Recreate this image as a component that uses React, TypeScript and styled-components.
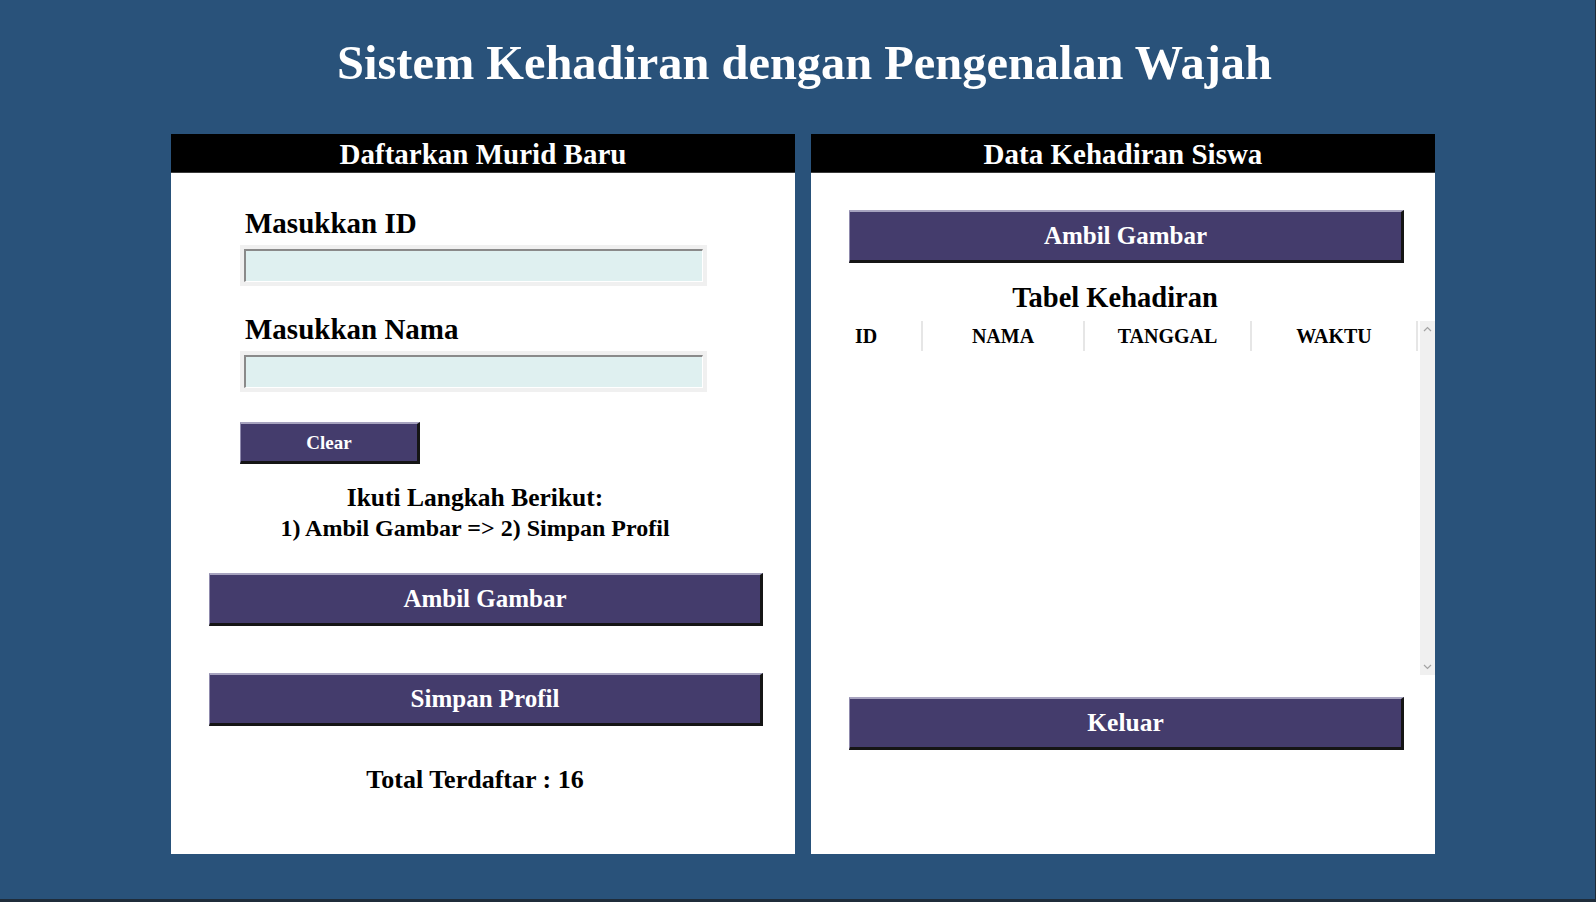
import React from 'react';
import styled, { createGlobalStyle } from 'styled-components';

const GlobalStyle = createGlobalStyle`
    html, body {
        margin: 0;
        padding: 0;
        background: #29527a;
    }
    * { box-sizing: border-box; }
`;

const Page = styled.div`
    height: 902px;
    background: #29527a;
    font-family: "Liberation Serif", "Times New Roman", serif;
    font-weight: bold;
    border-bottom: 3px solid #1f2c3a;
    border-right: 1px solid #1f2c3a;
    overflow: hidden;
`;

const Title = styled.h1`
    margin: 0;
    padding-top: 35px;
    padding-left: 14px;
    height: 91px;
    font-size: 48.4px;
    line-height: 56px;
    color: #ffffff;
    text-align: center;
`;

const Panels = styled.div`
    display: flex;
    gap: 16px;
    margin-top: 43px;
    padding-left: 171px;
`;

const Panel = styled.section`
    width: 624px;
    height: 720px;
    background: #ffffff;
    display: flex;
    flex-direction: column;
    align-items: flex-start;
`;

const PanelHeader = styled.div`
    width: 100%;
    height: 39px;
    padding-top: 2px;
    background: #000000;
    color: #ffffff;
    font-size: 29px;
    line-height: 37px;
    text-align: center;
    border-bottom: 1px solid #3a3a3a;
`;

const Label = styled.label<{ $top: number }>`
    display: block;
    margin-top: ${p => p.$top}px;
    margin-left: 74px;
    font-size: 29px;
    line-height: 34px;
    color: #000;
`;

const InputFrame = styled.div`
    margin-top: 5px;
    margin-left: 69px;
    width: 467px;
    height: 41px;
    border: 4px solid #f0f0f0;
`;

const Input = styled.input`
    display: block;
    width: 100%;
    height: 100%;
    margin: 0;
    padding: 0 4px;
    background: #dff0f0;
    border-style: solid;
    border-width: 2px 1px 1px 2px;
    border-color: #8a8a8a #ffffff #ffffff #8a8a8a;
    outline: none;
    font-family: inherit;
    font-size: 18px;
`;

const Button = styled.button<{ $w: number; $h: number; $size: number; $left: number; $top: number }>`
    display: block;
    margin: ${p => p.$top}px 0 0 ${p => p.$left}px;
    width: ${p => p.$w}px;
    height: ${p => p.$h}px;
    padding: 0;
    background: #443c6c;
    color: #ffffff;
    font-family: inherit;
    font-weight: bold;
    font-size: ${p => p.$size}px;
    border-style: solid;
    border-width: 2px 3px 3px 1px;
    border-color: #a7a3bf #151515 #151515 #8f8aad;
    cursor: pointer;
`;

const CenterText = styled.div<{ $top: number; $size: number; $lh: number }>`
    width: 608px;
    margin-top: ${p => p.$top}px;
    text-align: center;
    font-size: ${p => p.$size}px;
    line-height: ${p => p.$lh}px;
    color: #000;
`;

const Table = styled.div`
    margin-top: 6px;
    width: 624px;
    height: 354px;
    display: flex;
`;

const TableBody = styled.div`
    width: 609px;
    display: grid;
    grid-template-columns: 112px 162px 167px 166px;
    grid-template-rows: 30px;
    align-content: start;
`;

const HeadCell = styled.div`
    height: 30px;
    line-height: 30px;
    text-align: center;
    font-size: 20px;
    color: #000;
    border-right: 2px solid #e6e6e6;
`;

const ScrollBar = styled.div`
    width: 15px;
    height: 100%;
    background: #f0f0f0;
    display: flex;
    flex-direction: column;
    justify-content: space-between;
    align-items: center;
    padding: 5px 0;
`;

const Chevron: React.FC<{ down?: boolean }> = ({ down }) => (
    <svg width="9" height="6" viewBox="0 0 9 6">
        <path
            d={down ? 'M1 1 L4.5 4.5 L8 1' : 'M1 5 L4.5 1.5 L8 5'}
            fill="none"
            stroke="#a3a3a3"
            strokeWidth="1.2"
        />
    </svg>
);

const columns = ['ID', 'NAMA', 'TANGGAL', 'WAKTU'];

export default function App() {
    return (
        <Page>
            <GlobalStyle />
            <Title>Sistem Kehadiran dengan Pengenalan Wajah</Title>
            <Panels>
                <Panel>
                    <PanelHeader>Daftarkan Murid Baru</PanelHeader>
                    <Label $top={33}>Masukkan ID</Label>
                    <InputFrame><Input type="text" /></InputFrame>
                    <Label $top={26}>Masukkan Nama</Label>
                    <InputFrame><Input type="text" /></InputFrame>
                    <Button $w={180} $h={42} $size={19} $left={69} $top={30}>Clear</Button>
                    <CenterText $top={18} $size={25.5} $lh={31}>Ikuti Langkah Berikut:</CenterText>
                    <CenterText $top={0} $size={24} $lh={31}>1) Ambil Gambar =&gt; 2) Simpan Profil</CenterText>
                    <Button $w={554} $h={53} $size={25} $left={38} $top={29}>Ambil Gambar</Button>
                    <Button $w={554} $h={53} $size={25} $left={38} $top={47}>Simpan Profil</Button>
                    <CenterText $top={39} $size={26} $lh={30}>Total Terdaftar : 16</CenterText>
                </Panel>
                <Panel>
                    <PanelHeader>Data Kehadiran Siswa</PanelHeader>
                    <Button $w={555} $h={53} $size={25} $left={38} $top={37}>Ambil Gambar</Button>
                    <CenterText $top={18} $size={28.5} $lh={34}>Tabel Kehadiran</CenterText>
                    <Table>
                        <TableBody>
                            {columns.map(c => <HeadCell key={c}>{c}</HeadCell>)}
                        </TableBody>
                        <ScrollBar>
                            <Chevron />
                            <Chevron down />
                        </ScrollBar>
                    </Table>
                    <Button $w={555} $h={53} $size={25.5} $left={38} $top={22}>Keluar</Button>
                </Panel>
            </Panels>
        </Page>
    );
}
